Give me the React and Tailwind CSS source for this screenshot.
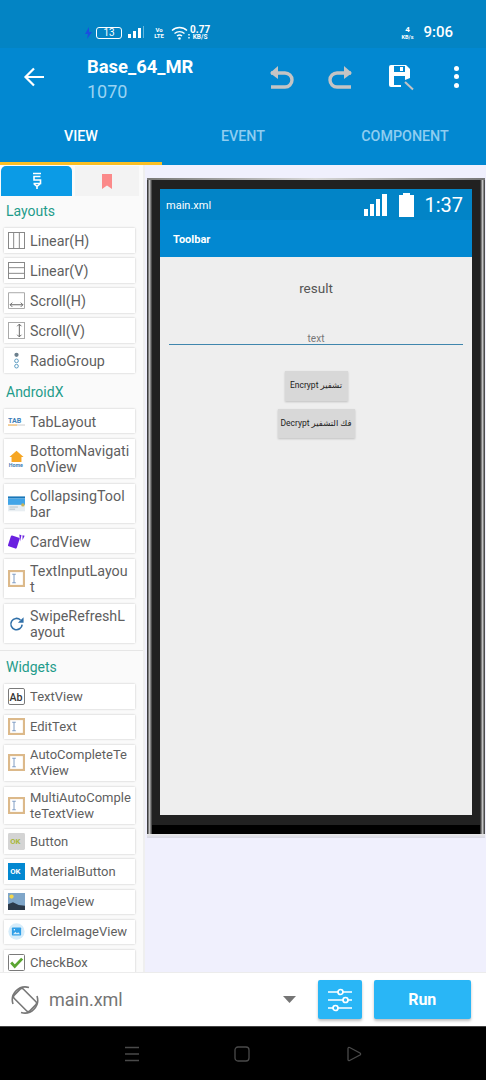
function Box({ children }) {
  return (
    <svg width="17" height="17" viewBox="0 0 24 24" className="shrink-0" fill="none" strokeWidth="1.4">
      {children}
    </svg>
  );
}

const InputIcon = () => (
  <Box>
    <rect x="1.5" y="1.5" width="21" height="21" fill="#fff" stroke="#dcb98a" strokeWidth="3" />
    <path d="M6 6h5M6 18h5M8.5 6v12" stroke="#7d9cc4" />
  </Box>
);

const icons = {
  linearH: (
    <Box>
      <rect x="0.7" y="0.7" width="22.6" height="22.6" stroke="#888" />
      <path d="M8 1v22M16 1v22" stroke="#888" />
    </Box>
  ),
  linearV: (
    <Box>
      <rect x="0.7" y="0.7" width="22.6" height="22.6" stroke="#888" />
      <path d="M1 8h22M1 16h22" stroke="#888" />
    </Box>
  ),
  scrollH: (
    <Box>
      <path d="M.7 1v22.3h22.6V1M.7 1h22.6" stroke="#aaa" />
      <path d="M3 18h18M3 18l3-3M3 18l3 3M21 18l-3-3M21 18l-3 3" stroke="#666" />
    </Box>
  ),
  scrollV: (
    <Box>
      <rect x="0.7" y="0.7" width="22.6" height="22.6" stroke="#aaa" />
      <path d="M16 3v18M16 3l-3 3M16 3l3 3M16 21l-3-3M16 21l3-3" stroke="#666" />
    </Box>
  ),
  radio: (
    <Box>
      <circle cx="12" cy="4" r="3" fill="#6b7f8c" />
      <circle cx="12" cy="12.5" r="2.6" stroke="#5b9bc0" />
      <circle cx="12" cy="20" r="2.6" stroke="#5b9bc0" />
    </Box>
  ),
  tab: (
    <Box>
      <text x="0" y="14" fontSize="10" fontWeight="700" fill="#3f7fb8" fontFamily="Roboto">TAB</text>
      <path d="M0 17h13" stroke="#e8a33d" />
      <path d="M13 17h11" stroke="#ccc" />
    </Box>
  ),
  bottomNav: (
    <Box>
      <path d="M12 1l10 9h-3v7H5v-7H2z" fill="#f6a623" />
      <text x="1" y="24" fontSize="7.5" fontWeight="700" fill="#3f7fb8" fontFamily="Roboto">Home</text>
    </Box>
  ),
  collapsing: (
    <Box>
      <rect x="0" y="2" width="24" height="3" fill="#1976b8" />
      <rect x="0" y="5" width="24" height="9" fill="#42a5e8" />
      <rect x="0" y="14" width="24" height="9" fill="#e8eef2" />
      <path d="M2 17h12M2 20h8" stroke="#b5c2c9" />
      <circle cx="21" cy="14" r="2.4" fill="#c9b458" />
    </Box>
  ),
  card: (
    <Box>
      <rect x="2" y="5" width="13" height="16" rx="1.5" fill="#6a21e0" transform="rotate(18 9 12)" />
      <path d="M16 2l3 1-2 9zM20.5 3l3 1-3 6z" fill="#6a21e0" />
    </Box>
  ),
  input: <InputIcon />,
  swipe: (
    <Box>
      <path d="M20 13.5a8 8 0 1 1-2.4-6.5" stroke="#2f6fa8" strokeWidth="2.2" />
      <path d="M14 11h8V3z" fill="#2f6fa8" />
    </Box>
  ),
  text: (
    <Box>
      <rect x="0.7" y="0.7" width="22.6" height="22.6" rx="2" fill="#fff" stroke="#777" />
      <text x="2" y="18" fontSize="15" fill="#333" fontFamily="Roboto" fontWeight="500">Ab</text>
    </Box>
  ),
  button: (
    <Box>
      <rect x="0" y="0" width="24" height="24" rx="2" fill="#d4d4d4" />
      <text x="3" y="16" fontSize="11" fontWeight="700" fill="#a8b83a" fontFamily="Roboto">OK</text>
    </Box>
  ),
  material: (
    <Box>
      <rect x="0" y="0" width="24" height="24" fill="#0288d1" />
      <text x="3" y="16" fontSize="11" fontWeight="700" fill="#fff" fontFamily="Roboto">OK</text>
    </Box>
  ),
  image: (
    <Box>
      <rect x="0" y="0" width="24" height="24" fill="#7fa6c9" />
      <circle cx="5" cy="5" r="3" fill="#f2d64b" />
      <path d="M0 24v-8l7-3 8 4 9 1v6z" fill="#2c3a4a" />
    </Box>
  ),
  circle: (
    <Box>
      <circle cx="12" cy="12" r="11.5" fill="#d5ecfa" />
      <rect x="5.5" y="6.5" width="13" height="11" rx="1" fill="#2f9fe8" />
      <path d="M7 16l3.5-3.5 2 2 2-1.5L17 16z" fill="#d5ecfa" />
      <circle cx="9" cy="9.5" r="1" fill="#fff" />
    </Box>
  ),
  check: (
    <Box>
      <rect x="0.7" y="0.7" width="22.6" height="22.6" rx="1.5" fill="#fff" stroke="#777" />
      <path d="M4.5 12l5 5.5L20 6.5" stroke="#5aa532" strokeWidth="4" />
    </Box>
  ),
};

const sections = [
  {
    title: "Layouts",
    pad: "pt-[7px] pb-[9px]",
    tallRow: "h-[39.4px]",
    textSize: "text-[14.3px]",
    rows: [
      ["Linear(H)", "linearH"],
      ["Linear(V)", "linearV"],
      ["Scroll(H)", "scrollH"],
      ["Scroll(V)", "scrollV"],
      ["RadioGroup", "radio"],
    ],
  },
  {
    title: "AndroidX",
    pad: "pt-[11px] pb-[9px]",
    tallRow: "h-[39.4px]",
    textSize: "text-[14.3px]",
    rows: [
      ["TabLayout", "tab"],
      ["BottomNavigati\nonView", "bottomNav", true],
      ["CollapsingTool\nbar", "collapsing", true],
      ["CardView", "card"],
      ["TextInputLayou\nt", "input", true],
      ["SwipeRefreshL\nayout", "swipe", true],
    ],
  },
  {
    title: "Widgets",
    pad: "pt-[8px] pb-[9px]",
    tallRow: "h-[36.8px]",
    textSize: "text-[13px]",
    rows: [
      ["TextView", "text"],
      ["EditText", "input"],
      ["AutoCompleteTe\nxtView", "input", true],
      ["MultiAutoComple\nteTextView", "input", true],
      ["Button", "button"],
      ["MaterialButton", "material"],
      ["ImageView", "image"],
      ["CircleImageView", "circle"],
      ["CheckBox", "check"],
    ],
  },
];

function PaletteRow({ label, icon, height, textSize }) {
  return (
    <div
      className={`flex items-center gap-[5px] bg-white pl-[4px] shadow-[0_0_2px_rgba(0,0,0,0.22)] ${height}`}
    >
      {icons[icon]}
      <span className={`whitespace-pre pt-px leading-[16px] text-[#5f5f5f] ${textSize}`}>
        {label}
      </span>
    </div>
  );
}

function Palette() {
  return (
    <aside className="flex h-full w-[145px] shrink-0 flex-col overflow-hidden border-r-2 border-[#efefef] bg-[#fafafa]">
      <div className="flex h-[31px] shrink-0 gap-[3px] pl-[1px] pr-[4px] pt-[1px]">
        <div className="flex w-[71px] items-center justify-center rounded-t-[5px] bg-[#0b9be6]">
          <svg width="10" height="18" viewBox="0 0 10 18" fill="none" stroke="#fff" strokeWidth="1.6">
            <path d="M1 1.5h8M8.5 4.5H2V8h6.5v3.5H1.5M5 14.5l3-2.5M5 14.5L2 12M5 17v-3" />
          </svg>
        </div>
        <div className="flex flex-1 items-center justify-center bg-[#f3f3f3]">
          <svg width="10" height="15" viewBox="0 0 10 15">
            <path d="M0 0h10v15L5 11.5 0 15z" fill="#fb8a8a" />
          </svg>
        </div>
      </div>
      <div className="min-h-0 flex-1 overflow-hidden pl-[4px] pr-[8px]">
        {sections.map((section, i) => (
          <div key={section.title}>
            {i === 2 && <div className="-ml-[4px] -mr-[8px] mt-[7px] h-px bg-[#e6e6e6]" />}
            <div className={`ml-[2px] text-[14px] leading-[16px] text-[#1f9c8b] ${section.pad}`}>
              {section.title}
            </div>
            <div className="flex flex-col gap-[5.6px]">
              {section.rows.map(([label, icon, tall]) => (
                <PaletteRow
                  key={label + icon}
                  label={label}
                  icon={icon}
                  textSize={section.textSize}
                  height={tall ? section.tallRow : "h-[24.5px]"}
                />
              ))}
            </div>
          </div>
        ))}
      </div>
    </aside>
  );
}

function StatusBar() {
  return (
    <div className="flex h-[48px] items-center bg-[#0384c4] pl-[84px] pr-[33px] pt-[17px] text-white">
      <svg width="9" height="12" viewBox="0 0 9 12">
        <path d="M5 0L1 7h3l-1 5 5-7H5z" fill="#1a4fe0" />
      </svg>
      <div className="ml-[3px] flex h-[12px] w-[26px] items-center justify-center rounded-[3px] border border-white text-[10px] leading-none">
        13
      </div>
      <svg className="ml-[5px]" width="18" height="13" viewBox="0 0 18 13">
        <path d="M1 8h3v4H1zM6 5h3v7H6zM11 2h3v10h-3z" fill="#fff" />
        <path d="M16 0h1v12h-1z" fill="#fff" opacity=".4" />
      </svg>
      <div className="ml-[9px] w-[10px] text-center text-[6px] font-bold leading-[6px]">
        Vo
        <br />
        LTE
      </div>
      <svg className="ml-[7px]" width="19" height="14" viewBox="0 0 19 14" fill="none" stroke="#fff" strokeWidth="1.4">
        <path d="M1 4.5a11 11 0 0 1 15 0M3.5 7.5a7.5 7.5 0 0 1 10 0M6 10a4 4 0 0 1 5 0" />
        <circle cx="8.5" cy="12.5" r=".6" fill="#fff" />
        <path d="M18 8v1.5M18 11v1.5" />
      </svg>
      <div className="text-center font-bold">
        <div className="text-[10px] leading-[9px]">0.77</div>
        <div className="text-[6.5px] leading-[7px]">KB/S</div>
      </div>
      <div className="ml-auto text-center">
        <div className="text-[8px] font-bold leading-[8px]">4</div>
        <div className="text-[5.5px] font-bold leading-[6px]">KB/s</div>
      </div>
      <div className="ml-[10px] text-[15px] font-medium leading-none">9:06</div>
    </div>
  );
}

function Header() {
  return (
    <div className="flex h-[67px] items-center bg-[#0288d1] pb-[10px]">
      <svg className="ml-[23px]" width="22" height="20" viewBox="0 0 22 20" fill="none" stroke="#fff" strokeWidth="2.2">
        <path d="M21 10H2.5M11 1.5L2.5 10l8.5 8.5" />
      </svg>
      <div className="ml-[42px] mt-[6px] w-[182px]">
        <div className="text-[18.4px] font-bold leading-[22px] text-white">Base_64_MR</div>
        <div className="mt-[3px] text-[18px] leading-[22px] text-[#9ad3f2]">1070</div>
      </div>
      <svg className="mt-[2px]" width="26" height="24" viewBox="0 0 26 24" fill="none">
        <path d="M2 7h14a6.5 6.5 0 0 1 0 14H2" stroke="#c4c4c4" strokeWidth="3.4" />
        <path d="M9 0v13L1 7z" fill="#c4c4c4" />
      </svg>
      <svg className="ml-[32px] mt-[2px]" width="26" height="24" viewBox="0 0 26 24" fill="none">
        <path d="M24 7H10a6.5 6.5 0 0 0 0 14h14" stroke="#c4c4c4" strokeWidth="3.4" />
        <path d="M17 0v13l8-6z" fill="#c4c4c4" />
      </svg>
      <svg className="ml-[35px] mt-[2px]" width="27" height="27" viewBox="0 0 27 27" fill="none">
        <path d="M1 3a2 2 0 0 1 2-2h15l4 4v9l-5 2v-4H6v9h7v2H3a2 2 0 0 1-2-2z" fill="#fff" />
        <rect x="6" y="2" width="11" height="6" fill="#0288d1" />
        <rect x="12" y="3" width="3" height="4" fill="#fff" />
        <path d="M17 18l8 7.5" stroke="#c4c4c4" strokeWidth="2" />
      </svg>
      <div className="ml-[39px] flex flex-col gap-[3.5px]">
        <span className="h-[5px] w-[5px] rounded-full bg-white" />
        <span className="h-[5px] w-[5px] rounded-full bg-white" />
        <span className="h-[5px] w-[5px] rounded-full bg-white" />
      </div>
    </div>
  );
}

function Tabs() {
  return (
    <div className="grid h-[50px] grid-cols-3 bg-[#0288d1] text-center text-[14.3px] font-medium leading-[42px]">
      <div className="border-b-[3px] border-[#fbbf24] text-white">VIEW</div>
      <div className="text-[#8fcdf0]">EVENT</div>
      <div className="text-[#8fcdf0]">COMPONENT</div>
    </div>
  );
}

function PhoneFrame() {
  const rail = "w-[5px] shrink-0 bg-gradient-to-r from-[#222] via-[#c4c4c4] to-[#333]";
  return (
    <div className="ml-[2px] mr-px mt-[13px] flex h-[660px] flex-col">
      <div className="h-[2px] bg-gradient-to-r from-[#777] via-[#d8d8d8] to-[#777]" />
      <div className="flex min-h-0 flex-1">
        <div className={rail} />
        <div className="flex min-w-0 flex-1 flex-col bg-[#212121] px-[8px] pt-[9px]">
          <div className="flex h-[626px] flex-col bg-[#eeeeee]">
            <div className="flex h-[31px] items-center bg-[#0284c7] pl-[6px] pr-[9px] text-white">
              <span className="pt-[3px] text-[11px]">main.xml</span>
              <svg className="ml-auto" width="27" height="24" viewBox="0 0 27 24">
                <path d="M1 16h4v7H1zM7 11h4v12H7zM13 6h4v17h-4zM19 1h5v22h-5z" fill="#fff" />
              </svg>
              <svg className="ml-[9px]" width="15" height="24" viewBox="0 0 15 24">
                <path d="M4 2V0h7v2h4v22H0V2z" fill="#fff" />
              </svg>
              <span className="ml-[10px] text-[20px] leading-none">1:37</span>
            </div>
            <div className="flex h-[37px] items-center bg-[#0288d1] pl-[13px] pt-[3px] text-[11px] font-bold text-white">
              Toolbar
            </div>
            <div className="mt-[23px] text-center text-[13.5px] leading-[16px] text-[#555]">result</div>
            <div className="mx-[9px] mt-[37px] border-b border-[#3f86ad] text-center text-[10px] leading-[11px] text-[#777]">
              text
            </div>
            <div className="mt-[26px] flex flex-col items-center gap-[8px] text-[8.5px] text-[#222]">
              <div className="flex h-[29.5px] w-[63px] items-center justify-center bg-[#d8d8d8] shadow-[0_1px_2px_rgba(0,0,0,0.2)]">
                Encrypt تشفير
              </div>
              <div className="flex h-[29.5px] w-[77px] items-center justify-center bg-[#d8d8d8] shadow-[0_1px_2px_rgba(0,0,0,0.2)]">
                Decrypt فك التشفير
              </div>
            </div>
          </div>
          <div className="-mx-[8px] mt-auto h-[9px] bg-black" />
        </div>
        <div className={rail} />
      </div>
      <div className="h-[4px] bg-gradient-to-b from-[#e8e8e8] to-[#d8d8e4]" />
    </div>
  );
}

function BottomBar() {
  return (
    <div className="flex h-[54px] shrink-0 items-center border-t border-[#ececec] bg-white pl-[10px]">
      <svg width="30" height="30" viewBox="0 0 30 30" fill="none" stroke="#777" strokeWidth="1.6">
        <rect x="8.5" y="4" width="13" height="22" rx="2" transform="rotate(-45 15 15)" />
        <path d="M3 19A13 13 0 0 1 19 2.5M27 11a13 13 0 0 1-16 16.5" />
      </svg>
      <span className="ml-[9px] text-[18px] text-[#757575]">main.xml</span>
      <svg className="ml-[160px]" width="13" height="7" viewBox="0 0 13 7">
        <path d="M0 0h13L6.5 7z" fill="#757575" />
      </svg>
      <div className="ml-[22px] flex h-[39px] w-[44px] items-center justify-center rounded-[2px] bg-[#29b6f6] shadow-[0_2px_3px_rgba(0,0,0,0.25)]">
        <svg width="26" height="24" viewBox="0 0 26 24" fill="none" stroke="#fff" strokeWidth="1.7">
          <path d="M1 4h10M16 4h9M1 12h15M21 12h4M1 20h5M11 20h14" />
          <circle cx="13.5" cy="4" r="2.5" />
          <circle cx="18.5" cy="12" r="2.5" />
          <circle cx="8.5" cy="20" r="2.5" />
        </svg>
      </div>
      <div className="ml-[12px] flex h-[39px] w-[97px] items-center justify-center rounded-[2px] bg-[#29b6f6] text-[16px] font-bold text-white shadow-[0_2px_3px_rgba(0,0,0,0.25)]">
        Run
      </div>
    </div>
  );
}

function NavBar() {
  return (
    <div className="flex h-[54px] shrink-0 items-center border-t border-[#444] bg-black">
      <svg className="ml-[124px]" width="16" height="16" viewBox="0 0 16 16" stroke="#4a4a4a" strokeWidth="1.3">
        <path d="M1 1.5h14M1 8h14M1 14.5h14" />
      </svg>
      <svg className="ml-[94px]" width="16" height="16" viewBox="0 0 16 16" fill="none" stroke="#4a4a4a" strokeWidth="1.3">
        <rect x="1" y="1" width="14" height="14" rx="3" />
      </svg>
      <svg className="ml-[96px]" width="16" height="16" viewBox="0 0 16 16" fill="none" stroke="#4a4a4a" strokeWidth="1.3">
        <path d="M2 2.5c0-1 .8-1.4 1.6-1L14 7c.8.5.8 1.5 0 2L3.6 14.5c-.8.4-1.6 0-1.600-1z" />
      </svg>
    </div>
  );
}

export default function App() {
  return (
    <div
      className="flex h-[1080px] w-[486px] flex-col overflow-hidden"
      style={{ fontFamily: 'Roboto, "DejaVu Sans", sans-serif' }}
    >
      <StatusBar />
      <Header />
      <Tabs />
      <div className="flex min-h-0 flex-1">
        <Palette />
        <main className="min-w-0 flex-1 bg-[#f0f0fd]">
          <PhoneFrame />
        </main>
      </div>
      <BottomBar />
      <NavBar />
    </div>
  );
}
